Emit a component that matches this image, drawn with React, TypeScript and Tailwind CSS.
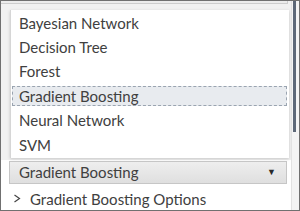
const options = ['Bayesian Network', 'Decision Tree', 'Forest', 'Gradient Boosting', 'Neural Network', 'SVM']
const selected = 'Gradient Boosting'

export default function App() {
  return (
    <div
      className="w-[300px] h-[211px] border border-[#707070] bg-white flex overflow-hidden text-[#404040]"
      style={{ fontFamily: 'Lato, "Noto Sans", sans-serif' }}
    >
      <div className="flex-1 flex flex-col">
        {/* panel behind the popup */}
        <div className="h-[10px] bg-[#f1f1f1] flex">
          <div className="w-[287px] h-[3px] border-b border-r border-[#cdcdcd] bg-[#ececec]" />
        </div>

        <div className="flex bg-[#f1f1f1] pl-[9px] pb-[2px]">
          <ul className="w-[279px] bg-white border-l border-[#d6d6d6] shadow-[0_1px_3px_rgba(0,0,0,0.18)] text-[15px] py-[0.5px]">
            {options.map((opt) =>
              opt === selected ? (
                <li key={opt} className="h-[24.4px] p-[2px] pl-[1px]">
                  <div className="h-full flex items-center pl-[6px] bg-[#e8ebef] border border-dashed border-[#9aa4b0]">
                    {opt}
                  </div>
                </li>
              ) : (
                <li key={opt} className="h-[24.4px] flex items-center pl-[8px]">
                  {opt}
                </li>
              )
            )}
          </ul>
        </div>

        <div className="pl-[8px] pt-[1px]">
          <button className="w-[278px] h-[23px] flex items-center justify-between pl-[9px] pr-[10px] border border-[#c6c6c6] bg-gradient-to-b from-[#eeeeee] to-[#dfdfdf] text-[15px] text-[#404040]">
            <span>Gradient Boosting</span>
            <span className="text-[9px] text-[#2a2a2a]">▼</span>
          </button>
        </div>

        <div className="flex items-center pl-[12px] pt-[4px] text-[15px]">
          <svg width="8" height="9" viewBox="0 0 8 9" className="text-[#444]">
            <path d="M1.5 1 L6.5 4.5 L1.5 8" fill="none" stroke="currentColor" strokeWidth="1.2" />
          </svg>
          <span className="ml-[9px]">Gradient Boosting Options</span>
        </div>
      </div>

      {/* scrollbar */}
      <div className="w-[8px] bg-[#f4f4f4] border-l border-[#e2e2e2] flex justify-start pl-[1px]">
        <div className="w-[3px] h-[131px] bg-[#5d6878]" />
      </div>
    </div>
  )
}
